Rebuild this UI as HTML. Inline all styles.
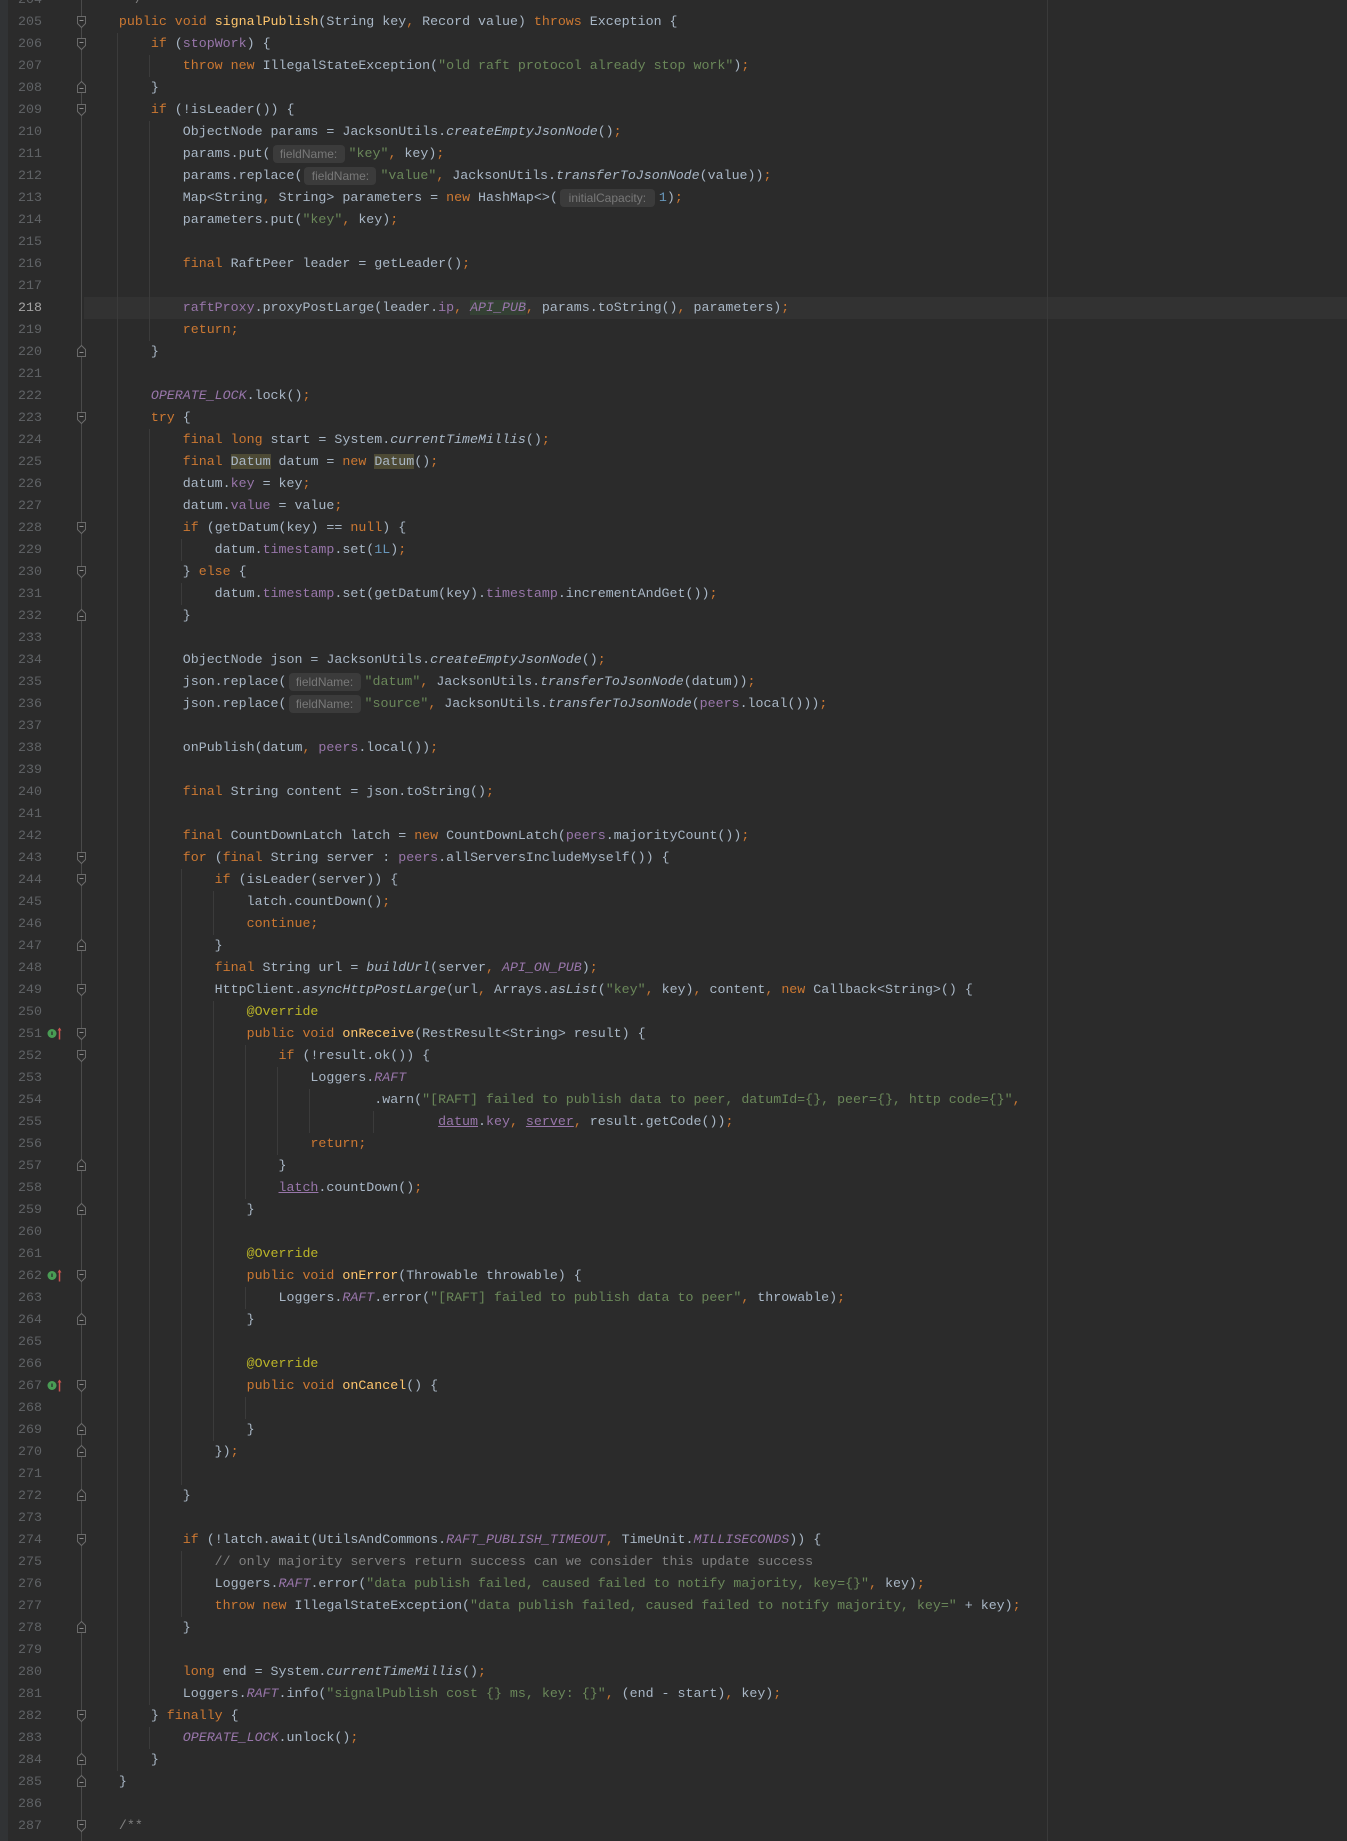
<!DOCTYPE html>
<html><head><meta charset="utf-8"><style>
html,body{margin:0;padding:0;}
body{width:1347px;height:1841px;background:#2b2b2b;position:relative;overflow:hidden;font-family:"Liberation Mono",monospace;}
.strip{position:absolute;left:0;top:0;width:8px;height:1841px;background:#313335;}
.margin{position:absolute;left:1047px;top:0;width:1px;height:1841px;background:#3a3a3a;}
.cur{position:absolute;left:84px;top:296.5px;width:1263px;height:22px;background:#323232;}
.fl{position:absolute;left:81px;top:0;width:1px;height:1841px;background:#4a4a4a;}
.g{position:absolute;width:1px;background:#3b3b3b;}
.nums{position:absolute;left:0;top:-11.5px;width:42px;text-align:right;font-size:13.3px;line-height:22px;color:#606366;}
.code{position:absolute;left:87px;top:-11.5px;font-size:13.3px;line-height:22px;color:#a9b7c6;white-space:normal;}
.code div{height:22px;white-space:pre;}
.k{color:#cc7832}.s{color:#6a8759}.f{color:#9876aa}.i{font-style:italic}.fi{color:#9876aa;font-style:italic}
.m{color:#ffc66d}.a{color:#bbb529}.n{color:#6897bb}.c{color:#808080}
.hl{background:#4d4a35}.gr{background:#344134}
.u{text-decoration:underline;}
.h{display:inline-block;font-family:"Liberation Sans",sans-serif;font-size:12px;color:#787878;background:#3b3b3b;border-radius:4px;line-height:18px;height:18px;vertical-align:top;margin:2px 4px 0 2px;text-align:center;}
</style></head><body>
<div class="strip"></div>
<div class="cur"></div>
<div class="margin"></div>
<div class="fl"></div>
<div class="g" style="left:117px;top:32.5px;height:1738px"></div>
<div class="g" style="left:149px;top:54.5px;height:22px"></div>
<div class="g" style="left:149px;top:120.5px;height:220px"></div>
<div class="g" style="left:149px;top:428.5px;height:1276px"></div>
<div class="g" style="left:149px;top:1726.5px;height:22px"></div>
<div class="g" style="left:181px;top:538.5px;height:22px"></div>
<div class="g" style="left:181px;top:582.5px;height:22px"></div>
<div class="g" style="left:181px;top:868.5px;height:616px"></div>
<div class="g" style="left:181px;top:1550.5px;height:66px"></div>
<div class="g" style="left:213px;top:890.5px;height:44px"></div>
<div class="g" style="left:213px;top:1000.5px;height:440px"></div>
<div class="g" style="left:245px;top:1044.5px;height:154px"></div>
<div class="g" style="left:245px;top:1286.5px;height:22px"></div>
<div class="g" style="left:245px;top:1396.5px;height:22px"></div>
<div class="g" style="left:277px;top:1066.5px;height:88px"></div>
<div class="g" style="left:309px;top:1088.5px;height:44px"></div>
<div class="g" style="left:373px;top:1110.5px;height:22px"></div>

<svg width="1347" height="1841" style="position:absolute;left:0;top:0" xmlns="http://www.w3.org/2000/svg">
<defs>
<g id="fs"><path d="M-4,-5 H4 V2 L0,6 L-4,2 Z" fill="#2b2b2b" stroke="#6a6a6a"/><path d="M-2,-1 H2" stroke="#8a8a8a"/></g>
<g id="fe"><path d="M-4,5 H4 V-2 L0,-6 L-4,-2 Z" fill="#2b2b2b" stroke="#6a6a6a"/><path d="M-2,1 H2" stroke="#8a8a8a"/></g>
<g id="ov"><circle cx="0" cy="0" r="4.5" fill="#499c54"/><path d="M0,-2 V1.5" stroke="#2b2b2b" stroke-width="1.3"/><path d="M7.5,-5 V6" stroke="#c75450" stroke-width="1.5"/><path d="M5.5,-3 L7.5,-6 L9.5,-3" fill="#c75450"/></g>
</defs>
<use href="#fs" x="81.5" y="21.5"/><use href="#fs" x="81.5" y="43.5"/><use href="#fe" x="81.5" y="87.5"/><use href="#fs" x="81.5" y="109.5"/>
<use href="#fe" x="81.5" y="351.5"/><use href="#fs" x="81.5" y="417.5"/><use href="#fs" x="81.5" y="527.5"/><use href="#fs" x="81.5" y="571.5"/>
<use href="#fe" x="81.5" y="615.5"/><use href="#fs" x="81.5" y="857.5"/><use href="#fs" x="81.5" y="879.5"/><use href="#fe" x="81.5" y="945.5"/>
<use href="#fs" x="81.5" y="989.5"/><use href="#fs" x="81.5" y="1033.5"/><use href="#fs" x="81.5" y="1055.5"/><use href="#fe" x="81.5" y="1165.5"/>
<use href="#fe" x="81.5" y="1209.5"/><use href="#fs" x="81.5" y="1275.5"/><use href="#fe" x="81.5" y="1319.5"/><use href="#fs" x="81.5" y="1385.5"/>
<use href="#fe" x="81.5" y="1429.5"/><use href="#fe" x="81.5" y="1451.5"/><use href="#fe" x="81.5" y="1495.5"/><use href="#fs" x="81.5" y="1539.5"/>
<use href="#fe" x="81.5" y="1627.5"/><use href="#fs" x="81.5" y="1715.5"/><use href="#fe" x="81.5" y="1759.5"/><use href="#fe" x="81.5" y="1781.5"/>
<use href="#fs" x="81.5" y="1825.5"/>
<use href="#ov" x="52" y="1033.5"/><use href="#ov" x="52" y="1275.5"/><use href="#ov" x="52" y="1385.5"/>
</svg>

<div class="nums">204<br>205<br>206<br>207<br>208<br>209<br>210<br>211<br>212<br>213<br>214<br>215<br>216<br>217<br><span style="color:#a4a3a3">218</span><br>219<br>220<br>221<br>222<br>223<br>224<br>225<br>226<br>227<br>228<br>229<br>230<br>231<br>232<br>233<br>234<br>235<br>236<br>237<br>238<br>239<br>240<br>241<br>242<br>243<br>244<br>245<br>246<br>247<br>248<br>249<br>250<br>251<br>252<br>253<br>254<br>255<br>256<br>257<br>258<br>259<br>260<br>261<br>262<br>263<br>264<br>265<br>266<br>267<br>268<br>269<br>270<br>271<br>272<br>273<br>274<br>275<br>276<br>277<br>278<br>279<br>280<br>281<br>282<br>283<br>284<br>285<br>286<br>287</div>

<div class="code">
<div><span class="c">     */</span></div>
<div>    <span class="k">public void</span> <span class="m">signalPublish</span>(String key<span class="k">,</span> Record value) <span class="k">throws</span> Exception {</div>
<div>        <span class="k">if</span> (<span class="f">stopWork</span>) {</div>
<div>            <span class="k">throw new</span> IllegalStateException(<span class="s">"old raft protocol already stop work"</span>)<span class="k">;</span></div>
<div>        }</div>
<div>        <span class="k">if</span> (!isLeader()) {</div>
<div>            ObjectNode params = JacksonUtils.<span class="i">createEmptyJsonNode</span>()<span class="k">;</span></div>
<div>            params.put(<span class="h" style="width:72px">fieldName:</span><span class="s">"key"</span><span class="k">,</span> key)<span class="k">;</span></div>
<div>            params.replace(<span class="h" style="width:72px">fieldName:</span><span class="s">"value"</span><span class="k">,</span> JacksonUtils.<span class="i">transferToJsonNode</span>(value))<span class="k">;</span></div>
<div>            Map&lt;String<span class="k">,</span> String&gt; parameters = <span class="k">new</span> HashMap&lt;&gt;(<span class="h" style="width:95px">initialCapacity:</span><span class="n">1</span>)<span class="k">;</span></div>
<div>            parameters.put(<span class="s">"key"</span><span class="k">,</span> key)<span class="k">;</span></div>
<div></div>
<div>            <span class="k">final</span> RaftPeer leader = getLeader()<span class="k">;</span></div>
<div></div>
<div>            <span class="f">raftProxy</span>.proxyPostLarge(leader.<span class="f">ip</span><span class="k">,</span> <span class="fi gr">API_PUB</span><span class="k">,</span> params.toString()<span class="k">,</span> parameters)<span class="k">;</span></div>
<div>            <span class="k">return;</span></div>
<div>        }</div>
<div></div>
<div>        <span class="fi">OPERATE_LOCK</span>.lock()<span class="k">;</span></div>
<div>        <span class="k">try</span> {</div>
<div>            <span class="k">final long</span> start = System.<span class="i">currentTimeMillis</span>()<span class="k">;</span></div>
<div>            <span class="k">final</span> <span class="hl">Datum</span> datum = <span class="k">new</span> <span class="hl">Datum</span>()<span class="k">;</span></div>
<div>            datum.<span class="f">key</span> = key<span class="k">;</span></div>
<div>            datum.<span class="f">value</span> = value<span class="k">;</span></div>
<div>            <span class="k">if</span> (getDatum(key) == <span class="k">null</span>) {</div>
<div>                datum.<span class="f">timestamp</span>.set(<span class="n">1L</span>)<span class="k">;</span></div>
<div>            } <span class="k">else</span> {</div>
<div>                datum.<span class="f">timestamp</span>.set(getDatum(key).<span class="f">timestamp</span>.incrementAndGet())<span class="k">;</span></div>
<div>            }</div>
<div></div>
<div>            ObjectNode json = JacksonUtils.<span class="i">createEmptyJsonNode</span>()<span class="k">;</span></div>
<div>            json.replace(<span class="h" style="width:72px">fieldName:</span><span class="s">"datum"</span><span class="k">,</span> JacksonUtils.<span class="i">transferToJsonNode</span>(datum))<span class="k">;</span></div>
<div>            json.replace(<span class="h" style="width:72px">fieldName:</span><span class="s">"source"</span><span class="k">,</span> JacksonUtils.<span class="i">transferToJsonNode</span>(<span class="f">peers</span>.local()))<span class="k">;</span></div>
<div></div>
<div>            onPublish(datum<span class="k">,</span> <span class="f">peers</span>.local())<span class="k">;</span></div>
<div></div>
<div>            <span class="k">final</span> String content = json.toString()<span class="k">;</span></div>
<div></div>
<div>            <span class="k">final</span> CountDownLatch latch = <span class="k">new</span> CountDownLatch(<span class="f">peers</span>.majorityCount())<span class="k">;</span></div>
<div>            <span class="k">for</span> (<span class="k">final</span> String server : <span class="f">peers</span>.allServersIncludeMyself()) {</div>
<div>                <span class="k">if</span> (isLeader(server)) {</div>
<div>                    latch.countDown()<span class="k">;</span></div>
<div>                    <span class="k">continue;</span></div>
<div>                }</div>
<div>                <span class="k">final</span> String url = <span class="i">buildUrl</span>(server<span class="k">,</span> <span class="fi">API_ON_PUB</span>)<span class="k">;</span></div>
<div>                HttpClient.<span class="i">asyncHttpPostLarge</span>(url<span class="k">,</span> Arrays.<span class="i">asList</span>(<span class="s">"key"</span><span class="k">,</span> key)<span class="k">,</span> content<span class="k">,</span> <span class="k">new</span> Callback&lt;String&gt;() {</div>
<div>                    <span class="a">@Override</span></div>
<div>                    <span class="k">public void</span> <span class="m">onReceive</span>(RestResult&lt;String&gt; result) {</div>
<div>                        <span class="k">if</span> (!result.ok()) {</div>
<div>                            Loggers.<span class="fi">RAFT</span></div>
<div>                                    .warn(<span class="s">"[RAFT] failed to publish data to peer, datumId={}, peer={}, http code={}"</span><span class="k">,</span></div>
<div>                                            <span class="f u">datum</span>.<span class="f">key</span><span class="k">,</span> <span class="f u">server</span><span class="k">,</span> result.getCode())<span class="k">;</span></div>
<div>                            <span class="k">return;</span></div>
<div>                        }</div>
<div>                        <span class="f u">latch</span>.countDown()<span class="k">;</span></div>
<div>                    }</div>
<div></div>
<div>                    <span class="a">@Override</span></div>
<div>                    <span class="k">public void</span> <span class="m">onError</span>(Throwable throwable) {</div>
<div>                        Loggers.<span class="fi">RAFT</span>.error(<span class="s">"[RAFT] failed to publish data to peer"</span><span class="k">,</span> throwable)<span class="k">;</span></div>
<div>                    }</div>
<div></div>
<div>                    <span class="a">@Override</span></div>
<div>                    <span class="k">public void</span> <span class="m">onCancel</span>() {</div>
<div></div>
<div>                    }</div>
<div>                })<span class="k">;</span></div>
<div></div>
<div>            }</div>
<div></div>
<div>            <span class="k">if</span> (!latch.await(UtilsAndCommons.<span class="fi">RAFT_PUBLISH_TIMEOUT</span><span class="k">,</span> TimeUnit.<span class="fi">MILLISECONDS</span>)) {</div>
<div>                <span class="c">// only majority servers return success can we consider this update success</span></div>
<div>                Loggers.<span class="fi">RAFT</span>.error(<span class="s">"data publish failed, caused failed to notify majority, key={}"</span><span class="k">,</span> key)<span class="k">;</span></div>
<div>                <span class="k">throw new</span> IllegalStateException(<span class="s">"data publish failed, caused failed to notify majority, key="</span> + key)<span class="k">;</span></div>
<div>            }</div>
<div></div>
<div>            <span class="k">long</span> end = System.<span class="i">currentTimeMillis</span>()<span class="k">;</span></div>
<div>            Loggers.<span class="fi">RAFT</span>.info(<span class="s">"signalPublish cost {} ms, key: {}"</span><span class="k">,</span> (end - start)<span class="k">,</span> key)<span class="k">;</span></div>
<div>        } <span class="k">finally</span> {</div>
<div>            <span class="fi">OPERATE_LOCK</span>.unlock()<span class="k">;</span></div>
<div>        }</div>
<div>    }</div>
<div></div>
<div>    <span class="c">/**</span></div>
</div>
</body></html>
